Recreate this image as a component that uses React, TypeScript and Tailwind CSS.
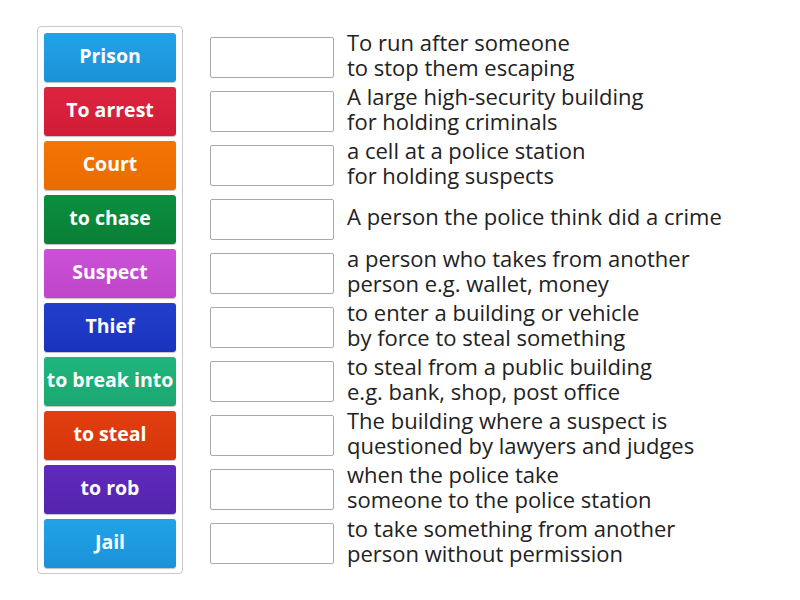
import React from 'react';

type Term = { label: string; color: string };

const terms: Term[] = [
  { label: 'Prison', color: 'bg-[linear-gradient(#22a2e8,#1a92d8)]' },
  { label: 'To arrest', color: 'bg-[linear-gradient(#de2340,#d11c35)]' },
  { label: 'Court', color: 'bg-[linear-gradient(#f37504,#ea6c00)]' },
  { label: 'to chase', color: 'bg-[linear-gradient(#0c8f3f,#087f36)]' },
  { label: 'Suspect', color: 'bg-[linear-gradient(#cb51d6,#be45c9)]' },
  { label: 'Thief', color: 'bg-[linear-gradient(#213fcc,#1a33bd)]' },
  { label: 'to break into', color: 'bg-[linear-gradient(#20b57e,#1aa872)]' },
  { label: 'to steal', color: 'bg-[linear-gradient(#e23f10,#d4350a)]' },
  { label: 'to rob', color: 'bg-[linear-gradient(#5f2abc,#5424ae)]' },
  { label: 'Jail', color: 'bg-[linear-gradient(#22a2e8,#1a92d8)]' },
];

const definitions: string[][] = [
  ['To run after someone', 'to stop them escaping'],
  ['A large high-security building', 'for holding criminals'],
  ['a cell at a police station', 'for holding suspects'],
  ['A person the police think did a crime'],
  ['a person who takes from another', 'person e.g. wallet, money'],
  ['to enter a building or vehicle', 'by force to steal something'],
  ['to steal from a public building', 'e.g. bank, shop, post office'],
  ['The building where a suspect is', 'questioned by lawyers and judges'],
  ['when the police take', 'someone to the police station'],
  ['to take something from another', 'person without permission'],
];

export default function App() {
  return (
    <div className="w-[800px] h-[600px] bg-white font-['Open_Sans',sans-serif] pl-[37px] pt-[26px] flex items-start">
      {/* Term tiles */}
      <div className="w-[146px] border border-[#c9c9c9] rounded-[4px] pl-[6px] pt-[6px] pb-[5px] flex flex-col gap-[5px]">
        {terms.map((t) => (
          <div
            key={t.label}
            className={`w-[132px] h-[49px] pb-[3px] rounded-[3px] ${t.color} shadow-[0_1px_1px_rgba(0,0,0,0.25)] flex items-center justify-center text-white font-bold text-[19.5px] whitespace-nowrap`}
          >
            {t.label}
          </div>
        ))}
      </div>

      {/* Drop zones and definitions */}
      <div className="ml-[27px] pt-[4px] flex flex-col">
        {definitions.map((lines, i) => (
          <div key={i} className="h-[54px] flex items-center">
            <div className="w-[124px] h-[41px] border border-[#a9a9a9] rounded-[2px] bg-white shrink-0" />
            <div className="ml-[13px] pb-[5px] text-[22px] leading-[25px] text-[#222] whitespace-nowrap">
              {lines.map((l) => (
                <div key={l}>{l}</div>
              ))}
            </div>
          </div>
        ))}
      </div>
    </div>
  );
}
